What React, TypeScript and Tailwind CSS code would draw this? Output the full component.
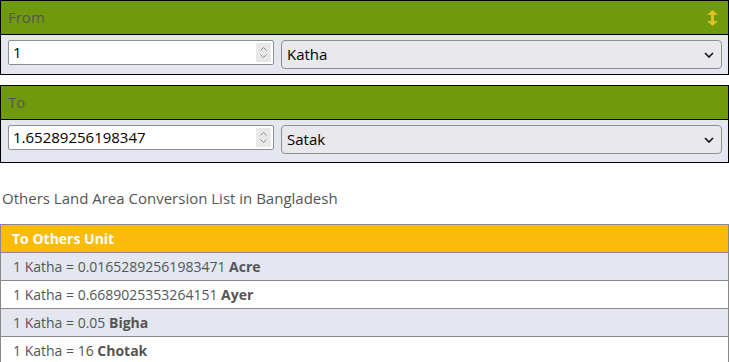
import React from 'react';

const rows = [
  { value: '0.01652892561983471', unit: 'Acre' },
  { value: '0.6689025353264151', unit: 'Ayer' },
  { value: '0.05', unit: 'Bigha' },
  { value: '16', unit: 'Chotak' },
];

const Spinner: React.FC = () => (
  <div className="w-[15px] h-[19px] bg-[#e8e8e8] flex items-center justify-center">
    <svg width="9" height="13" viewBox="0 0 9 13" fill="none" stroke="#8a8a8a" strokeWidth="1">
      <path d="M1.5 4.5 L4.5 1.5 L7.5 4.5" />
      <path d="M1.5 8.5 L4.5 11.5 L7.5 8.5" />
    </svg>
  </div>
);

const Panel: React.FC<{ title: string; value: string; unit: string; swap?: boolean; bottom: string }> = ({ title, value, unit, swap, bottom }) => (
  <div className="border border-black">
    <div className="h-[34px] bg-[#709a0d] border-b border-black flex items-center justify-between pl-[7px] pr-[10px]">
      <span className="text-[15px] text-[#555]">{title}</span>
      {swap && (
        <svg width="11" height="16" viewBox="0 0 11 16" fill="#e0c020">
          <path d="M5.5 0 L11 5 L7 5 L7 11 L11 11 L5.5 16 L0 11 L4 11 L4 5 L0 5 Z" />
        </svg>
      )}
    </div>
    <div className={`bg-[#e4e7f0] flex items-start gap-[7px] pl-[7px] pr-[6px] pt-[5px] ${bottom}`}>
      <div className="w-[266px] h-[25px] bg-white border border-[#8f8f8f] rounded-[2px] flex items-center justify-between pl-[4px] pr-[2px]">
        <span className="text-[15px] text-black">{value}</span>
        <Spinner />
      </div>
      <div className="flex-1 h-[29px] bg-[#e9e9ed] border border-[#8f8f8f] rounded-[4px] flex items-center justify-between pl-[5px] pr-[7px]">
        <span className="text-[15px] text-black">{unit}</span>
        <svg width="10" height="6" viewBox="0 0 10 6" fill="none" stroke="#111" strokeWidth="1.6">
          <path d="M1 1 L5 5 L9 1" />
        </svg>
      </div>
    </div>
  </div>
);

export default function App() {
  return (
    <div className="w-[729px] bg-white font-['Open_Sans','Noto_Sans',sans-serif]">
      <div className="flex flex-col gap-[10px]">
        <Panel title="From" value="1" unit="Katha" swap bottom="pb-[5px]" />
        <Panel title="To" value="1.65289256198347" unit="Satak" bottom="pb-[8px]" />
      </div>
      <h3 className="mt-[24px] mb-[15px] pl-[2px] text-[15px] text-[#555] leading-[22px]">
        Others Land Area Conversion List in Bangladesh
      </h3>
      <div className="border border-[#888] border-b-0">
        <div className="h-[28px] bg-[#fabc09] border-b border-[#888] flex items-center px-[11px]">
          <span className="text-[14px] font-bold text-white">To Others Unit</span>
        </div>
        {rows.map((r, i) => (
          <div
            key={r.unit}
            className={`h-[28px] border-b border-[#888] flex items-center px-[12px] text-[14px] text-[#555] ${i % 2 === 0 ? 'bg-[#e4e7f0]' : 'bg-white'}`}
          >
            <span>
              1 Katha = {r.value} <b className="font-bold">{r.unit}</b>
            </span>
          </div>
        ))}
      </div>
    </div>
  );
}
